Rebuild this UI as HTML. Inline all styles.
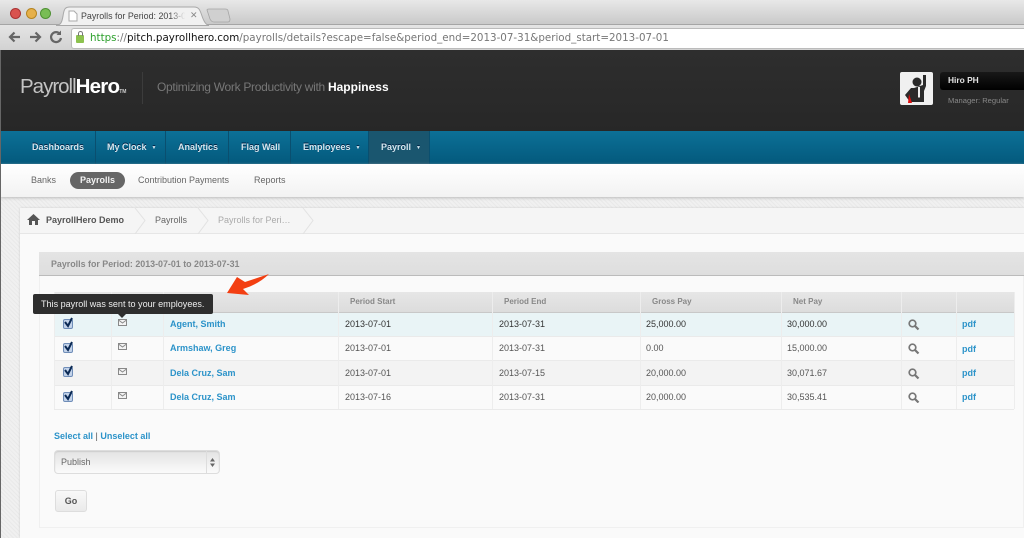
<!DOCTYPE html>
<html><head><meta charset="utf-8"><style>
html,body{margin:0;padding:0}
body{width:1024px;height:538px;overflow:hidden;position:relative;background:#ededed;font-family:"Liberation Sans",sans-serif;font-size:9px;color:#555}
div,span,a,svg{position:absolute;white-space:nowrap}
b{font-weight:bold}
#w{left:0;top:0;width:1024px;height:538px;overflow:hidden;filter:blur(.3px);background:repeating-linear-gradient(45deg,#e9e9e9 0 1px,#f0f0f0 1px 3px)}
.nv{top:131px;height:33px;line-height:32px;color:#d5e6ee;font-weight:bold;font-size:9px;text-shadow:0 -1px 0 #024}
.sep{top:131px;width:1px;height:33px;background:#0a4f6f}
.h{top:292px;height:20px;line-height:20px;color:#888;font-weight:bold;font-size:8px}
.c{color:#555;font-size:9px;line-height:12px}
.l{color:#2c93c9;font-weight:bold;font-size:9px;line-height:12px}
.r{left:54px;width:960px;border-bottom:1px solid #eaeaea;box-sizing:border-box}
.v{width:1px;top:292px;height:117px;background:#ededed}
.cb{left:63px;width:8px;height:8px;background:#c3d3ea;border:1px solid #6f8db8;border-radius:2px}
</style></head><body><div id="w">
<!-- browser chrome -->
<div style="left:0;top:0;width:1024px;height:24px;background:linear-gradient(#e8e8e8,#c9c9c9)"></div>
<div style="left:0;top:24px;width:1024px;height:26px;background:linear-gradient(#e4e4e4,#d2d2d2);border-top:1px solid #a5a5a5;box-sizing:border-box"></div>
<div style="left:10px;top:8px;width:9px;height:9px;border-radius:50%;background:#d9534f;border:1px solid #a33"></div>
<div style="left:26px;top:8px;width:9px;height:9px;border-radius:50%;background:#e6b04a;border:1px solid #b58420"></div>
<div style="left:40px;top:8px;width:9px;height:9px;border-radius:50%;background:#79bd55;border:1px solid #4f9133"></div>
<svg style="left:56px;top:5px" width="180" height="21"><path d="M0 20.500C5 20 6 17 7 11C8 4 9 2 14 2H138C143 2 144 5 146 11C148 17 150 20 153 20.500Z" fill="#f1f1f1" stroke="#a8a8a8"/><path d="M151 5C151 4 152 4 153 4H169C171 4 172 5 172 6L174 14C174 16 173 17 172 17H158C156 17 155 16 154 14Z" fill="#d0d0d0" stroke="#a5a5a5" stroke-width=".8"/></svg>
<svg style="left:68px;top:10px" width="10" height="12"><path d="M1 1H6L9 4V11H1Z" fill="#fff" stroke="#aaa"/></svg>
<div style="left:81px;top:10px;font-size:8.900px;line-height:12px;color:#444;width:104px;overflow:hidden">Payrolls for Period: 2013-07</div>
<div style="left:170px;top:8px;width:18px;height:14px;background:linear-gradient(90deg,rgba(241,241,241,0),#f1f1f1 85%)"></div>
<div style="left:190px;top:9px;font-size:9px;line-height:13px;color:#888">✕</div>
<svg style="left:7px;top:29px" width="60" height="16" fill="none" stroke="#666" stroke-width="2.200"><path d="M13 8H3M7.500 3.500L3 8L7.500 12.500"/><path d="M23 8H33M28.500 3.500L33 8L28.500 12.500"/><path d="M53 5A5 5 0 1 0 54 9"/><path d="M54 1.500V6H49.500Z" fill="#666" stroke="none"/></svg>
<div style="left:71px;top:28px;width:953px;height:21px;background:#fff;border:1px solid #bbb;border-right:0;border-radius:3px 0 0 3px;box-sizing:border-box"></div>
<div style="left:76px;top:35px;width:8px;height:8px;background:#8dc24f;border-radius:1px"></div>
<div style="left:77.500px;top:31px;width:3px;height:4px;border:1px solid #777;border-bottom:0;border-radius:3px 3px 0 0"></div>
<div style="left:90px;top:30px;line-height:16px;color:#777;font-family:'DejaVu Sans','Liberation Sans',sans-serif;font-size:10.320px"><span style="position:static;color:#2ca02c">https</span>://<span style="position:static;color:#111">pitch.payrollhero.com</span>/payrolls/details?escape=false&amp;period_end=2013-07-31&amp;period_start=2013-07-01</div>
<!-- header -->
<div style="left:0;top:50px;width:1024px;height:81px;background:linear-gradient(#2e2e2e,#272727)"></div>
<div style="left:20px;top:74px;font-size:20.500px;line-height:26px;color:#c4c4c4;letter-spacing:-1px">Payroll<b style="color:#fff;letter-spacing:-.8px">Hero</b><span style="position:static;font-size:5px;letter-spacing:0;color:#ccc"><b>TM</b></span></div>
<div style="left:142px;top:72px;width:1px;height:32px;background:#3c3c3c"></div>
<div style="left:157px;top:80px;font-size:12px;line-height:15px;color:#777;letter-spacing:-.3px">Optimizing Work Productivity with <b style="color:#fff;letter-spacing:0">Happiness</b></div>
<div style="left:900px;top:72px;width:33px;height:33px;background:#f0f0f0;border-radius:2px"></div>
<svg style="left:900px;top:72px" width="33" height="33"><path d="M23 3H26V14L24 19V30H10L5 23L11 16L14 16L17 15L23 13Z" fill="#2a2a2a"/><circle cx="17" cy="10" r="4.500" fill="#2a2a2a"/><path d="M18 15H20L20 25L19 26L18 25Z" fill="#eee"/><path d="M9 22L12 31H8Z" fill="#e01010"/></svg>
<div style="left:940px;top:72px;width:84px;height:18px;background:linear-gradient(#181818,#000);border-radius:3px 0 0 3px"></div>
<div style="left:948px;top:75px;font-size:8.400px;line-height:11px;font-weight:bold;color:#e4e4e4">Hiro PH</div>
<div style="left:948px;top:95px;font-size:7.600px;line-height:11px;color:#888">Manager: Regular</div>
<!-- nav -->
<div style="left:0;top:131px;width:1024px;height:33px;background:linear-gradient(#0c7097,#03597c)"></div>
<div style="left:369px;top:131px;width:60px;height:33px;background:#1a566f"></div>
<div class="sep" style="left:95px"></div><div class="sep" style="left:165px"></div><div class="sep" style="left:228px"></div><div class="sep" style="left:290px"></div><div class="sep" style="left:368px"></div><div class="sep" style="left:429px"></div>
<div class="nv" style="left:32px">Dashboards</div>
<div class="nv" style="left:107px">My Clock &nbsp;<span style="position:static;font-size:5px;vertical-align:1px">▼</span></div>
<div class="nv" style="left:178px">Analytics</div>
<div class="nv" style="left:241px">Flag Wall</div>
<div class="nv" style="left:303px">Employees &nbsp;<span style="position:static;font-size:5px;vertical-align:1px">▼</span></div>
<div class="nv" style="left:381px">Payroll &nbsp;<span style="position:static;font-size:5px;vertical-align:1px">▼</span></div>
<!-- subnav -->
<div style="left:0;top:164px;width:1024px;height:33px;background:linear-gradient(#fff,#f2f2f2);box-shadow:0 1px 3px #bbb"></div>
<div style="left:31px;top:174px;line-height:12px;color:#666">Banks</div>
<div style="left:70px;top:172px;width:55px;height:17px;border-radius:9px;background:#666;color:#f4f4f4;font-weight:bold;text-align:center;line-height:16px">Payrolls</div>
<div style="left:138px;top:174px;line-height:12px;color:#666">Contribution Payments</div>
<div style="left:254px;top:174px;line-height:12px;color:#666">Reports</div>
<!-- panel -->
<div style="left:20px;top:208px;width:1004px;height:330px;background:#fafafa;box-shadow:0 0 2px #ccc;border-radius:2px 0 0 0"></div>
<div style="left:20px;top:208px;width:1004px;height:26px;background:#f5f5f5;border-bottom:1px solid #e6e6e6;box-sizing:border-box"></div>
<svg style="left:27px;top:213px" width="13" height="12"><path d="M6.500 1L0 7H2V12H5V8H8V12H11V7H13Z" fill="#555"/></svg>
<div style="left:46px;top:214px;line-height:12px;font-weight:bold;color:#555">PayrollHero Demo</div>
<div style="left:155px;top:214px;line-height:12px;color:#666">Payrolls</div>
<div style="left:218px;top:214px;line-height:12px;color:#aaa">Payrolls for Peri…</div>
<svg style="left:130px;top:208px" width="190" height="26" fill="none" stroke="#e2e2e2"><path d="M5 0L15 12.500L5 26M68 0L78 12.500L68 26M173 0L183 12.500L173 26"/></svg>
<!-- content -->
<div style="left:39px;top:252px;width:985px;height:276px;background:#fafafa;border:1px solid #f0f0f0;box-sizing:border-box"></div>
<div style="left:39px;top:252px;width:985px;height:24px;background:linear-gradient(#e4e4e4,#dedede);border-bottom:1px solid #bbb;box-sizing:border-box"></div>
<div style="left:51px;top:258px;line-height:12px;font-size:8.900px;font-weight:bold;color:#888">Payrolls for Period: 2013-07-01 to 2013-07-31</div>
<!-- table -->
<div style="left:54px;top:292px;width:960px;height:21px;background:linear-gradient(#e6e6e6,#dcdcdc);border-bottom:1px solid #c8c8c8;box-sizing:border-box"></div>
<div class="r" style="top:313px;height:24px;background:#e9f4f6"></div>
<div class="r" style="top:337px;height:24px;background:#fafafa"></div>
<div class="r" style="top:361px;height:25px;background:#f3f3f3"></div>
<div class="r" style="top:386px;height:24px;background:#fafafa"></div>
<div class="v" style="left:54px"></div><div class="v" style="left:111px"></div><div class="v" style="left:163px"></div><div class="v" style="left:338px"></div><div class="v" style="left:492px"></div><div class="v" style="left:640px"></div><div class="v" style="left:781px"></div><div class="v" style="left:901px"></div><div class="v" style="left:956px"></div><div class="v" style="left:1014px"></div>
<div class="h" style="left:350px">Period Start</div><div class="h" style="left:504px">Period End</div><div class="h" style="left:652px">Gross Pay</div><div class="h" style="left:793px">Net Pay</div>
<!-- rows -->
<div class="cb" style="top:319px"></div><div class="cb" style="top:343px"></div><div class="cb" style="top:367px"></div><div class="cb" style="top:392px"></div>
<svg style="left:63px;top:316px" width="12" height="90" fill="none" stroke="#0b2a55" stroke-width="2"><path d="M2 6L5 10L9 2M2 30L5 34L9 26M2 54L5 58L9 50M2 79L5 83L9 75"/></svg>
<svg style="left:118px;top:319px" width="10" height="82" fill="#f3f3f3" stroke="#888"><g id="m"><rect x=".5" y=".5" width="8" height="6"/><path d="M.5 1L4.500 4L8.500 1" fill="none"/></g><use href="#m" y="24"/><use href="#m" y="49"/><use href="#m" y="73"/></svg>
<div class="l" style="left:170px;top:318px">Agent, Smith</div><div class="l" style="left:170px;top:342px">Armshaw, Greg</div><div class="l" style="left:170px;top:367px">Dela Cruz, Sam</div><div class="l" style="left:170px;top:391px">Dela Cruz, Sam</div>
<div class="c" style="left:345px;top:318px;color:#333">2013-07-01</div><div class="c" style="left:345px;top:342px">2013-07-01</div><div class="c" style="left:345px;top:367px">2013-07-01</div><div class="c" style="left:345px;top:391px">2013-07-16</div>
<div class="c" style="left:499px;top:318px;color:#333">2013-07-31</div><div class="c" style="left:499px;top:342px">2013-07-31</div><div class="c" style="left:499px;top:367px">2013-07-15</div><div class="c" style="left:499px;top:391px">2013-07-31</div>
<div class="c" style="left:646px;top:318px;color:#333">25,000.00</div><div class="c" style="left:646px;top:342px">0.00</div><div class="c" style="left:646px;top:367px">20,000.00</div><div class="c" style="left:646px;top:391px">20,000.00</div>
<div class="c" style="left:787px;top:318px;color:#333">30,000.00</div><div class="c" style="left:787px;top:342px">15,000.00</div><div class="c" style="left:787px;top:367px">30,071.67</div><div class="c" style="left:787px;top:391px">30,535.41</div>
<svg style="left:908px;top:319px" width="12" height="84" fill="none" stroke="#777"><g id="s"><circle cx="4.500" cy="4.500" r="3.300" stroke-width="1.700"/><path d="M7 7L10.500 10.500" stroke-width="2.200"/></g><use href="#s" y="24"/><use href="#s" y="49"/><use href="#s" y="73"/></svg>
<div class="l" style="left:962px;top:318px">pdf</div><div class="l" style="left:962px;top:343px">pdf</div><div class="l" style="left:962px;top:367px">pdf</div><div class="l" style="left:962px;top:391px">pdf</div>
<!-- tooltip -->
<div style="left:33px;top:294px;width:180px;height:20px;background:#2e2e2e;border-radius:2px;color:#eee;font-size:9.050px;line-height:20px;text-indent:8px">This payroll was sent to your employees.</div>
<div style="left:118px;top:314px;width:0;height:0;border-left:4px solid transparent;border-right:4px solid transparent;border-top:4px solid #2e2e2e"></div>
<!-- arrow -->
<svg style="left:0;top:0" width="300" height="300"><path d="M269 274L245 282L237 277L227 293L249 295L243 289Q259 284 269 274Z" fill="#f33f12"/></svg>
<!-- bottom -->
<div class="l" style="left:54px;top:430px">Select all <span style="position:static;font-weight:normal;color:#555">|</span> Unselect all</div>
<div style="left:54px;top:450px;width:166px;height:24px;border:1px solid #ddd;border-radius:4px;background:linear-gradient(#e3e3e3,#fbfbfb);box-sizing:border-box;box-shadow:inset 0 1px 1px #ccc"></div>
<div style="left:61px;top:456px;line-height:12px;color:#666">Publish</div>
<div style="left:206px;top:451px;width:1px;height:22px;background:#ddd"></div>
<svg style="left:209px;top:458px" width="7" height="9" fill="#666"><path d="M3.500 0L6 3.500H1ZM3.500 9L1 5.500H6Z"/></svg>
<div style="left:55px;top:490px;width:32px;height:22px;border:1px solid #ddd;border-radius:3px;background:linear-gradient(#f8f8f8,#eaeaea);box-sizing:border-box;text-align:center;line-height:20px;font-weight:bold;color:#555">Go</div>
<!-- left window edge -->
<div style="left:0;top:50px;width:1px;height:488px;background:#666"></div>
</div></body></html>
